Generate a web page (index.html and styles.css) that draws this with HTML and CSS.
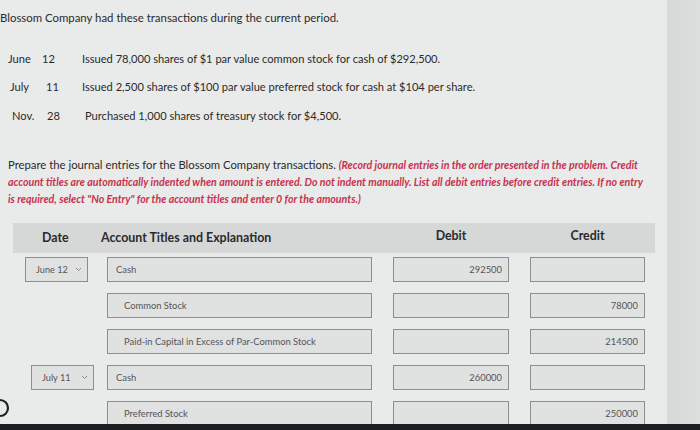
FILE: index.html
```html
<!DOCTYPE html>
<html>
<head>
<meta charset="utf-8">
<link rel="stylesheet" href="styles.css">
</head>
<body>
<div class="screen">
  <div class="page">
    <p class="title">Blossom Company had these transactions during the current period.</p>
    <div class="tx">
      <div class="tx-row"><span class="m">June</span><span class="d">12</span><span class="desc">Issued 78,000 shares of $1 par value common stock for cash of $292,500.</span></div>
      <div class="tx-row"><span class="m m2">July</span><span class="d d2">11</span><span class="desc">Issued 2,500 shares of $100 par value preferred stock for cash at $104 per share.</span></div>
      <div class="tx-row"><span class="m m3">Nov.</span><span class="d d2">28</span><span class="desc desc3">Purchased 1,000 shares of treasury stock for $4,500.</span></div>
    </div>
    <p class="instr">Prepare the journal entries for the Blossom Company transactions. <em>(Record journal entries in the order presented in the problem. Credit<br>account titles are automatically indented when amount is entered. Do not indent manually. List all debit entries before credit entries. If no entry<br>is required, select "No Entry" for the account titles and enter 0 for the amounts.)</em></p>
    <div class="journal">
      <div class="jhead">
        <div class="h-date">Date</div>
        <div class="h-acct">Account Titles and Explanation</div>
        <div class="h-num">Debit</div>
        <div class="h-num">Credit</div>
      </div>
      <div class="jrow">
        <div class="sel"><span>June 12</span><svg class="chev" width="7" height="5" viewBox="0 0 7 5"><path d="M1 1l2.5 2.5L6 1" fill="none" stroke="#8a8a8a" stroke-width="1"/></svg></div>
        <div class="box acct">Cash</div>
        <div class="box num">292500</div>
        <div class="box num"></div>
      </div>
      <div class="jrow">
        <div></div>
        <div class="box acct cr">Common Stock</div>
        <div class="box num"></div>
        <div class="box num">78000</div>
      </div>
      <div class="jrow">
        <div></div>
        <div class="box acct cr">Paid-in Capital in Excess of Par-Common Stock</div>
        <div class="box num"></div>
        <div class="box num">214500</div>
      </div>
      <div class="jrow">
        <div class="sel sel2"><span>July 11</span><svg class="chev" width="7" height="5" viewBox="0 0 7 5"><path d="M1 1l2.5 2.5L6 1" fill="none" stroke="#8a8a8a" stroke-width="1"/></svg></div>
        <div class="box acct">Cash</div>
        <div class="box num">260000</div>
        <div class="box num"></div>
      </div>
      <div class="jrow">
        <div></div>
        <div class="box acct cr">Preferred Stock</div>
        <div class="box num"></div>
        <div class="box num">250000</div>
      </div>
    </div>
    <svg class="ring" width="20" height="24" viewBox="0 0 20 24"><circle cx="2" cy="12" r="8" fill="none" stroke="#1f2226" stroke-width="2.2"/></svg>
  </div>
  <div class="side"></div>
</div>
<div class="bezel"></div>
</body>
</html>
```
FILE: styles.css
```css
html, body {
  margin: 0;
  padding: 0;
  width: 700px;
  height: 430px;
  overflow: hidden;
  background: #e8e9e9;
  font-family: Lato, "Open Sans", sans-serif;
  color: #2b2b2b;
}
.screen {
  display: flex;
  height: 424px;
  overflow: hidden;
}
.page {
  position: relative;
  width: 667px;
  flex: none;
  background: #e9eaea;
}
.side {
  flex: 1;
  background: linear-gradient(90deg, #d8dada, #dcdede);
}
.bezel {
  height: 6px;
  background: #1c1e21;
}
.title {
  margin: 0;
  padding-top: 11px;
  line-height: 14px;
  font-size: 11.4px;
}
.tx {
  margin-top: 19px;
}
.tx-row {
  display: flex;
  height: 28.5px;
  align-items: center;
  font-size: 11.1px;
}
.m {
  width: 34px;
  padding-left: 8px;
}
.m2 { width: 36px; padding-left: 10px; }
.m3 { width: 35px; padding-left: 12px; }
.d {
  width: 40px;
}
.d2 { width: 36px; }
.desc3 { padding-left: 2px; }
.instr {
  margin: 26px 0 0 0;
  padding-left: 8px;
  height: 51px;
  font-size: 11.3px;
  line-height: 17px;
  white-space: nowrap;
}
.instr em {
  color: #c8324e;
  font-style: italic;
  font-weight: 700;
  font-size: 10.6px;
  line-height: 14px;
}
.journal {
  margin: 16px 0 0 13px;
  width: 642px;
}
.jhead {
  display: grid;
  grid-template-columns: 73px 265px 116px 115px;
  column-gap: 21px;
  height: 30px;
  align-items: center;
  background: #d6d8d8;
  font-size: 12.4px;
  font-weight: 700;
  color: #2a2a2a;
}
.h-date { padding-left: 29px; }
.h-acct { margin-left: -6px; }
.h-num { text-align: center; margin-top: -4px; }
.jrow {
  display: grid;
  grid-template-columns: 73px 265px 116px 115px;
  column-gap: 21px;
  height: 25px;
  margin-top: 11px;
}
.jhead + .jrow { margin-top: 4px; }
.box, .sel {
  box-sizing: border-box;
  height: 25px;
  border: 1px solid #8d8f8f;
  background: #e0e1e1;
  font-size: 9.4px;
  color: #555;
  display: flex;
  align-items: center;
}
.sel {
  margin-left: 12px;
  width: 63px;
  padding-left: 10px;
  justify-content: space-between;
  padding-right: 5px;
  font-size: 9.2px;
}
.sel2 { margin-left: 18px; }
.acct { padding-left: 8px; }
.acct.cr { padding-left: 16px; }
.num {
  justify-content: flex-end;
  padding-right: 6px;
}
.ring {
  position: absolute;
  left: -2px;
  top: 396px;
}
```
